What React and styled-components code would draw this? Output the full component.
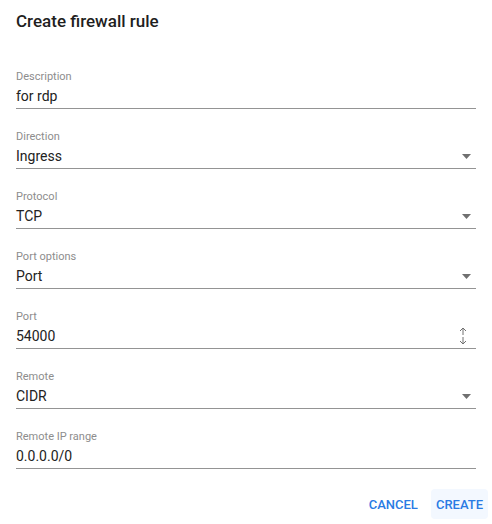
import React from "react";
import styled, { createGlobalStyle } from "styled-components";

const GlobalStyle = createGlobalStyle`
  html, body {
    margin: 0;
    padding: 0;
    background: #ffffff;
  }
  body {
    font-family: Roboto, "Noto Sans", "Liberation Sans", sans-serif;
    -webkit-font-smoothing: antialiased;
  }
`;

const Dialog = styled.div`
  width: 492px;
  height: 524px;
  box-sizing: border-box;
  background: #ffffff;
  display: flex;
  flex-direction: column;
`;

const Title = styled.h2`
  margin: 0;
  padding: 11px 16px 0;
  font-size: 17px;
  line-height: 20px;
  font-weight: 500;
  color: #1f1f1f;
`;

const Content = styled.div`
  padding: 39px 16px 0;
  display: flex;
  flex-direction: column;
  gap: 21px;
`;

const Field = styled.label`
  display: flex;
  flex-direction: column;
`;

const Label = styled.span`
  font-size: 11px;
  line-height: 14px;
  color: #8d8d8d;
`;

const InputRow = styled.div`
  margin-top: 2px;
  padding-bottom: 2px;
  border-bottom: 1px solid #949494;
  display: flex;
  align-items: center;
`;

const Input = styled.input`
  flex: 1;
  min-width: 0;
  border: none;
  outline: none;
  padding: 0;
  margin: 0;
  background: transparent;
  font-family: inherit;
  font-size: 14px;
  line-height: 20px;
  height: 20px;
  color: #222222;
`;

const Value = styled.span`
  flex: 1;
  font-size: 14px;
  line-height: 20px;
  height: 20px;
  color: #222222;
`;

const IconBox = styled.span`
  display: flex;
  align-items: center;
  justify-content: center;
  width: ${({ $w }) => $w}px;
  margin-right: ${({ $mr }) => $mr}px;
  color: #707070;
`;

const Actions = styled.div`
  margin-top: auto;
  padding: 0 4px 5px 0;
  display: flex;
  justify-content: flex-end;
  gap: 8px;
`;

const Button = styled.button`
  height: 30px;
  padding: 0 5px;
  border: none;
  border-radius: 4px;
  background: ${({ $focused }) => ($focused ? "#f3f8ff" : "transparent")};
  color: #2a7be4;
  font-family: inherit;
  font-size: 13px;
  font-weight: 500;
  letter-spacing: 0;
  text-transform: uppercase;
  cursor: pointer;
`;

const DropArrow = () => (
  <IconBox $w={9} $mr={5}>
    <svg width="9" height="5" viewBox="0 0 9 5">
      <path d="M0 0h9L4.5 5z" fill="currentColor" />
    </svg>
  </IconBox>
);

const SpinArrows = () => (
  <IconBox $w={8} $mr={9}>
    <svg width="8" height="18" viewBox="0 0 8 18" fill="none" stroke="currentColor" strokeWidth="1">
      <path d="M4 1v7M1 4l3-3 3 3" />
      <path d="M4 10v7M1 14l3 3 3-3" />
    </svg>
  </IconBox>
);

const fields = [
  { label: "Description", value: "for rdp", kind: "text" },
  { label: "Direction", value: "Ingress", kind: "select" },
  { label: "Protocol", value: "TCP", kind: "select" },
  { label: "Port options", value: "Port", kind: "select" },
  { label: "Port", value: "54000", kind: "number" },
  { label: "Remote", value: "CIDR", kind: "select" },
  { label: "Remote IP range", value: "0.0.0.0/0", kind: "text" },
];

export default function App() {
  return (
    <>
      <GlobalStyle />
      <Dialog>
        <Title>Create firewall rule</Title>
        <Content>
          {fields.map((f) => (
            <Field key={f.label}>
              <Label>{f.label}</Label>
              <InputRow>
                {f.kind === "select" ? (
                  <>
                    <Value>{f.value}</Value>
                    <DropArrow />
                  </>
                ) : (
                  <>
                    <Input type="text" defaultValue={f.value} />
                    {f.kind === "number" && <SpinArrows />}
                  </>
                )}
              </InputRow>
            </Field>
          ))}
        </Content>
        <Actions>
          <Button>Cancel</Button>
          <Button $focused>Create</Button>
        </Actions>
      </Dialog>
    </>
  );
}
